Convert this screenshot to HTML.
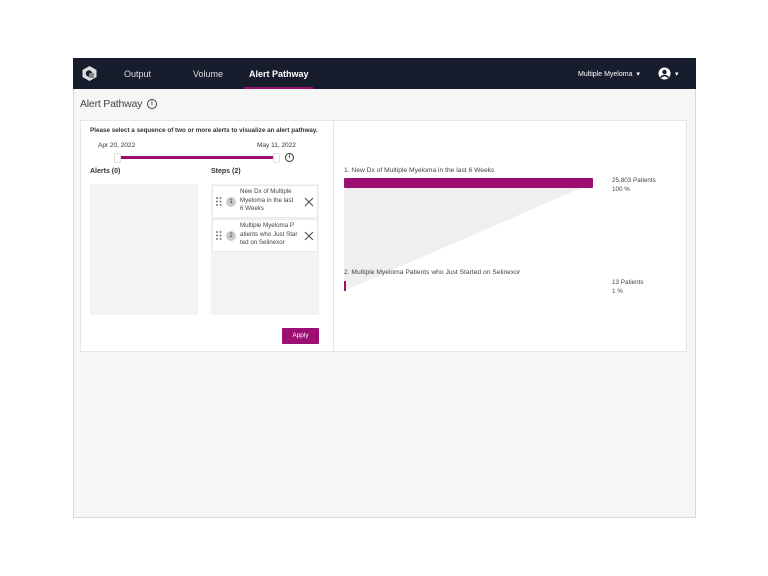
<!DOCTYPE html>
<html><head><style>
*{margin:0;padding:0;box-sizing:border-box}
body{width:768px;height:576px;background:#fff;font-family:"Liberation Sans",sans-serif;position:relative;overflow:hidden;color:#333}
.a{position:absolute}
.frame{left:73px;top:58px;width:623px;height:460px;background:#f6f6f6;border:1px solid #d8d8d8}
.nav{left:73px;top:58px;width:623px;height:31px;background:#181d2e;color:#fff}
.t{font-size:7px;white-space:nowrap}
</style></head><body>
<div class="a frame"></div>
<div class="a nav">
 <svg class="a" style="left:8px;top:7px" width="17" height="17" viewBox="0 0 17 17"><polygon points="8.5,1 15.5,5 15.5,12 8.5,16 1.5,12 1.5,5" fill="#ddd"/><circle cx="8" cy="8.5" r="3.2" fill="#181d2e"/><rect x="8" y="8" width="5" height="5" fill="#888"/></svg>
 <div class="a" style="left:51px;top:11px;font-size:9px;color:#ddd">Output</div>
 <div class="a" style="left:120px;top:11px;font-size:9px;color:#ddd">Volume</div>
 <div class="a" style="left:176px;top:11px;font-size:9px;font-weight:bold">Alert Pathway</div>
 <div class="a" style="left:171px;top:29px;width:69px;height:2px;background:#9c0e72"></div>
 <div class="a" style="left:505px;top:12px;font-size:7px">Multiple Myeloma&nbsp; ▾</div>
 <svg class="a" style="left:585px;top:9px" width="13" height="13" viewBox="0 0 13 13"><circle cx="6.5" cy="6.5" r="6" fill="#fff"/><circle cx="6.5" cy="5" r="2.2" fill="#181d2e"/><path d="M2.5 10.5 Q6.5 6.5 10.5 10.5" stroke="#181d2e" stroke-width="1.6" fill="none"/></svg>
 <div class="a" style="left:602px;top:12px;font-size:7px">▾</div>
</div>
<div class="a" style="left:80px;top:98px;font-size:10.5px;color:#444;letter-spacing:-0.2px">Alert Pathway</div>
<div class="a" style="left:147px;top:99px;width:10px;height:10px;border:1.3px solid #444;border-radius:50%;font-size:6px;text-align:center;line-height:8px;font-weight:bold">i</div>
<div class="a" style="left:80px;top:120px;width:607px;height:232px;background:#fff;border:1px solid #e6e6e6"></div>
<div class="a" style="left:333px;top:120px;width:1px;height:232px;background:#e6e6e6"></div>
<div class="a t" style="left:90px;top:127px;font-size:6.3px;font-weight:bold;color:#333">Please select a sequence of two or more alerts to visualize an alert pathway.</div>
<div class="a t" style="left:98px;top:142px;font-size:6.5px">Apr 20, 2022</div>
<div class="a t" style="left:257px;top:142px;font-size:6.5px">May 11, 2022</div>
<div class="a" style="left:114px;top:153px;width:7px;height:10px;border:1px solid #e0e0e0;background:#fff;border-radius:2px"></div>
<div class="a" style="left:273px;top:153px;width:7px;height:10px;border:1px solid #e0e0e0;background:#fff;border-radius:2px"></div>
<div class="a" style="left:121px;top:156px;width:152px;height:3px;background:#9c0e72"></div>
<div class="a" style="left:285px;top:153px;width:9px;height:9px;border:1.2px solid #333;border-radius:50%;font-size:5.5px;text-align:center;line-height:7px;font-weight:bold">i</div>
<div class="a t" style="left:90px;top:168px;font-weight:bold">Alerts (0)</div>
<div class="a t" style="left:211px;top:168px;font-weight:bold">Steps (2)</div>
<div class="a" style="left:90px;top:184px;width:108px;height:131px;background:#f3f3f3"></div>
<div class="a" style="left:211px;top:184px;width:108px;height:131px;background:#f3f3f3"></div>
<div class="a" style="left:212px;top:185px;width:106px;height:33px;background:#fff;border:1px solid #e8e8e8"></div>
<div class="a" style="left:212px;top:219px;width:106px;height:33px;background:#fff;border:1px solid #e8e8e8"></div>
<svg class="a" style="left:216px;top:197px" width="6" height="10"><g fill="#555"><circle cx="1" cy="1" r=".9"/><circle cx="4.5" cy="1" r=".9"/><circle cx="1" cy="4.5" r=".9"/><circle cx="4.5" cy="4.5" r=".9"/><circle cx="1" cy="8" r=".9"/><circle cx="4.5" cy="8" r=".9"/></g></svg>
<svg class="a" style="left:216px;top:231px" width="6" height="10"><g fill="#555"><circle cx="1" cy="1" r=".9"/><circle cx="4.5" cy="1" r=".9"/><circle cx="1" cy="4.5" r=".9"/><circle cx="4.5" cy="4.5" r=".9"/><circle cx="1" cy="8" r=".9"/><circle cx="4.5" cy="8" r=".9"/></g></svg>
<div class="a" style="left:226px;top:197px;width:10px;height:10px;border-radius:50%;background:#ccc;font-size:6px;text-align:center;line-height:10px">1</div>
<div class="a" style="left:226px;top:231px;width:10px;height:10px;border-radius:50%;background:#ccc;font-size:6px;text-align:center;line-height:10px">2</div>
<div class="a" style="left:240px;top:188px;font-size:6.2px;line-height:8.6px;color:#444">New Dx of Multiple<br>Myeloma in the last<br>6 Weeks</div>
<div class="a" style="left:240px;top:222px;font-size:6.2px;line-height:8.6px;color:#444">Multiple Myeloma P<br>atients who Just Star<br>ted on Selinexor</div>
<svg class="a" style="left:304px;top:197px" width="10" height="10"><path d="M1 1L9 9M9 1L1 9" stroke="#555" stroke-width="1.2"/></svg>
<svg class="a" style="left:304px;top:231px" width="10" height="10"><path d="M1 1L9 9M9 1L1 9" stroke="#555" stroke-width="1.2"/></svg>
<div class="a" style="left:282px;top:328px;width:37px;height:16px;background:#9c0e72;color:#fff;font-size:6.5px;text-align:center;line-height:16px;border-radius:1px">Apply</div>
<div class="a t" style="left:344px;top:167px;font-size:6.7px;color:#444">1. New Dx of Multiple Myeloma in the last 6 Weeks</div>
<div class="a" style="left:344px;top:178px;width:249px;height:10px;background:#9c0e72;border-radius:1px"></div>
<svg class="a" style="left:344px;top:188px" width="240" height="104"><polygon points="0,0 237,0 0,103" fill="#efefef"/></svg>
<div class="a t" style="left:612px;top:176px;font-size:6.3px;line-height:9px;color:#444">25,803 Patients<br>100 %</div>
<div class="a t" style="left:344px;top:269px;font-size:6.7px;color:#444">2. Multiple Myeloma Patients who Just Started on Selinexor</div>
<div class="a" style="left:344px;top:281px;width:2px;height:10px;background:#9c0e72"></div>
<div class="a t" style="left:612px;top:278px;font-size:6.3px;line-height:9px;color:#444">13 Patients<br>1 %</div>
</body></html>
